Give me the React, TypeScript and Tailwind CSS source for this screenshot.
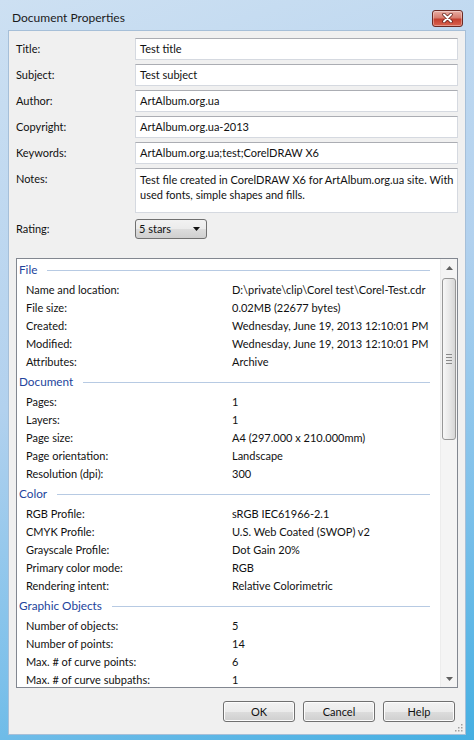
import React from 'react';

const sections: { title: string; rows: [string, string][] }[] = [
  {
    title: 'File',
    rows: [
      ['Name and location:', 'D:\\private\\clip\\Corel test\\Corel-Test.cdr'],
      ['File size:', '0.02MB (22677 bytes)'],
      ['Created:', 'Wednesday, June 19, 2013 12:10:01 PM'],
      ['Modified:', 'Wednesday, June 19, 2013 12:10:01 PM'],
      ['Attributes:', 'Archive'],
    ],
  },
  {
    title: 'Document',
    rows: [
      ['Pages:', '1'],
      ['Layers:', '1'],
      ['Page size:', 'A4 (297.000 x 210.000mm)'],
      ['Page orientation:', 'Landscape'],
      ['Resolution (dpi):', '300'],
    ],
  },
  {
    title: 'Color',
    rows: [
      ['RGB Profile:', 'sRGB IEC61966-2.1'],
      ['CMYK Profile:', 'U.S. Web Coated (SWOP) v2'],
      ['Grayscale Profile:', 'Dot Gain 20%'],
      ['Primary color mode:', 'RGB'],
      ['Rendering intent:', 'Relative Colorimetric'],
    ],
  },
  {
    title: 'Graphic Objects',
    rows: [
      ['Number of objects:', '5'],
      ['Number of points:', '14'],
      ['Max. # of curve points:', '6'],
      ['Max. # of curve subpaths:', '1'],
    ],
  },
];

const fields: [string, string][] = [
  ['Title:', 'Test title'],
  ['Subject:', 'Test subject'],
  ['Author:', 'ArtAlbum.org.ua'],
  ['Copyright:', 'ArtAlbum.org.ua-2013'],
  ['Keywords:', 'ArtAlbum.org.ua;test;CorelDRAW X6'],
];

function TextBox({ children, className = '' }: { children: React.ReactNode; className?: string }) {
  return (
    <div
      className={`flex-1 min-w-0 overflow-hidden bg-white border border-[#d5d9e0] border-t-[#abadb3] px-[4px] text-[#111] whitespace-nowrap ${className}`}
    >
      {children}
    </div>
  );
}

function WinButton({ label }: { label: string }) {
  return (
    <button
      type="button"
      className="w-[72px] h-[21px] rounded-[3px] border border-[#707070] bg-[linear-gradient(#f2f2f2,#ebebeb_50%,#dddddd_50%,#cfcfcf)] text-[11px] text-[#111] shadow-[inset_0_0_0_1px_#fcfcfc]"
    >
      {label}
    </button>
  );
}

export default function App() {
  return (
    <div className="w-[474px] h-[740px] flex flex-col px-[8px] pb-[5px] bg-[linear-gradient(160deg,#cde0f2,#b2d1ee_45%,#7cc0ea_75%,#45afe2)] font-['Lato','Liberation_Sans',sans-serif] text-[11px] leading-[16px] text-[#111]">
      <div className="h-[30px] pt-[6px] flex items-center justify-between pl-[4px] pr-[3px]">
        <span className="text-[12px] text-[#1b1b1b]">Document Properties</span>
        <div className="w-[31px] h-[17px] rounded-[3px] border border-[#6b2a24] bg-[linear-gradient(#e9aea4,#d77d6f_45%,#c4402f_55%,#d9634f)] flex items-center justify-center shadow-[inset_0_0_0_1px_rgba(255,255,255,0.35)]">
          <svg width="11" height="10" viewBox="0 0 11 10">
            <path d="M2 1.5 L9 8.5 M9 1.5 L2 8.5" stroke="#5a1a14" strokeWidth="3.4" strokeLinecap="round" />
            <path d="M2 1.5 L9 8.5 M9 1.5 L2 8.5" stroke="#ffffff" strokeWidth="2" strokeLinecap="round" />
          </svg>
        </div>
      </div>

      <div className="relative flex-1 flex flex-col bg-[#f0f0f0] border border-[#a6bfd8]">
        <div className="px-[7px] pt-[7px] flex flex-col gap-[4px]">
          {fields.map(([label, value]) => (
            <div key={label} className="flex items-center h-[22px]">
              <span className="w-[119px] shrink-0">{label}</span>
              <TextBox className="h-[22px] flex items-center">{value}</TextBox>
            </div>
          ))}
          <div className="flex items-start h-[45px]">
            <span className="w-[119px] shrink-0 pt-[3px]">Notes:</span>
            <TextBox className="h-[45px] pt-[3px] leading-[15px]">
              Test file created in CorelDRAW X6 for ArtAlbum.org.ua site. With
              <br />
              used fonts, simple shapes and fills.
            </TextBox>
          </div>
          <div className="flex items-center h-[20px] mt-[2px]">
            <span className="w-[119px] shrink-0">Rating:</span>
            <div className="w-[72px] h-[20px] rounded-[3px] border border-[#707070] bg-[linear-gradient(#f2f2f2,#ebebeb_50%,#dddddd_50%,#cfcfcf)] flex items-center justify-between pl-[3px] pr-[6px]">
              <span>5 stars</span>
              <svg width="7" height="4" viewBox="0 0 7 4">
                <path d="M0 0 H7 L3.5 4 Z" fill="#111" />
              </svg>
            </div>
          </div>
        </div>

        <div className="mt-[19px] mx-[7px] h-[430px] flex border border-[#828790] bg-white overflow-hidden">
          <div className="flex-1 min-w-0 flex flex-col">
            {sections.map((s) => (
              <div key={s.title} className="flex flex-col">
                <div className="h-[22px] shrink-0 flex items-center pl-[2px] pr-[10px]">
                  <span className="text-[#23449c] text-[11.75px]">{s.title}</span>
                  <div className="flex-1 h-px ml-[10px] bg-[#b7cae3]" />
                </div>
                {s.rows.map(([k, v]) => (
                  <div key={k} className="h-[18px] shrink-0 flex items-center pl-[9px] whitespace-nowrap">
                    <span className="w-[206px] shrink-0">{k}</span>
                    <span>{v}</span>
                  </div>
                ))}
              </div>
            ))}
          </div>
          <div className="w-[17px] shrink-0 flex flex-col bg-[#f4f4f4] border-l border-[#ececec]">
            <div className="h-[17px] flex items-center justify-center">
              <svg width="7" height="4" viewBox="0 0 7 4">
                <path d="M0 4 H7 L3.5 0 Z" fill="#606060" />
              </svg>
            </div>
            <div className="mt-[2px] mx-[1px] h-[162px] rounded-[3px] border border-[#979797] bg-[linear-gradient(90deg,#f7f7f7,#e9e9e9_50%,#d6d6d6)] flex flex-col items-center justify-center gap-[2px]">
              <div className="w-[6px] h-px bg-[#8a8a8a]" />
              <div className="w-[6px] h-px bg-[#8a8a8a]" />
              <div className="w-[6px] h-px bg-[#8a8a8a]" />
              <div className="w-[6px] h-px bg-[#8a8a8a]" />
            </div>
            <div className="flex-1" />
            <div className="h-[17px] flex items-center justify-center">
              <svg width="7" height="4" viewBox="0 0 7 4">
                <path d="M0 0 H7 L3.5 4 Z" fill="#606060" />
              </svg>
            </div>
          </div>
        </div>

        <div className="mt-[13px] flex justify-end gap-[8px] pr-[10px]">
          <WinButton label="OK" />
          <WinButton label="Cancel" />
          <WinButton label="Help" />
        </div>

        <svg className="absolute right-[2px] bottom-[2px]" width="9" height="9" viewBox="0 0 9 9">
          <rect x="7" y="1" width="1.5" height="1.5" fill="#a0a0a0" />
          <rect x="4" y="4" width="1.5" height="1.5" fill="#a0a0a0" />
          <rect x="7" y="4" width="1.5" height="1.5" fill="#a0a0a0" />
          <rect x="1" y="7" width="1.5" height="1.5" fill="#a0a0a0" />
          <rect x="4" y="7" width="1.5" height="1.5" fill="#a0a0a0" />
          <rect x="7" y="7" width="1.5" height="1.5" fill="#a0a0a0" />
        </svg>
      </div>
    </div>
  );
}
